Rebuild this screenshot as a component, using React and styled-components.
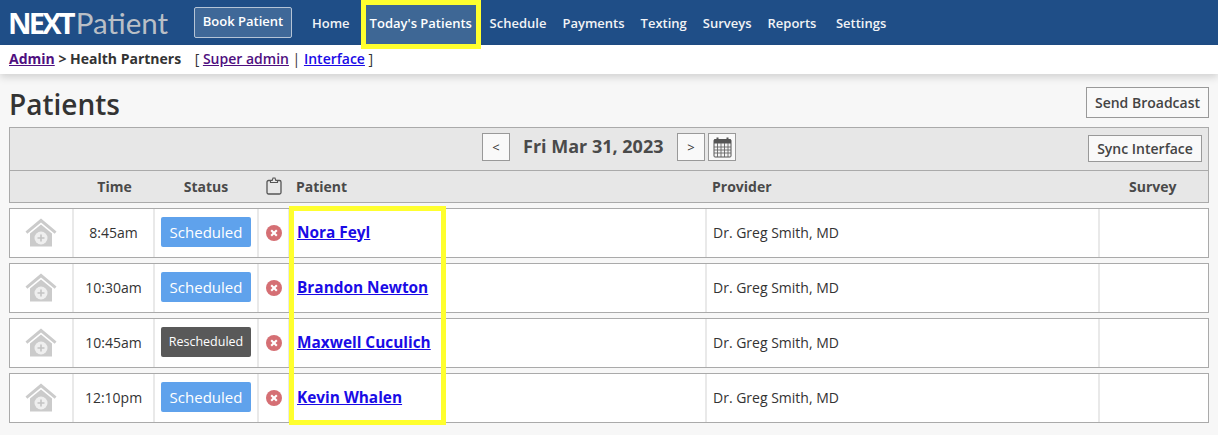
import styled, { createGlobalStyle } from "styled-components";

const GlobalStyle = createGlobalStyle`
  html, body { margin: 0; padding: 0; }
  body {
    background: #f7f7f7;
    font-family: "Open Sans", "Liberation Sans", sans-serif;
    color: #333;
    height: 435px;
    overflow: hidden;
  }
`;

const COLUMNS = "64px 81px 104px 31px 1fr 393px 108px";

const TopBar = styled.header`
  height: 45px;
  background: #1f4e87;
  display: flex;
  align-items: flex-start;
  padding-left: 8px;
  box-sizing: border-box;
  position: relative;
`;

const Logo = styled.div`
  width: 186px;
  height: 45px;
  font-family: Lato, "Open Sans", sans-serif;
  font-size: 29.5px;
  line-height: 45px;
  color: #b9bfc6;
  white-space: nowrap;
`;

const LogoBold = styled.b`
  font-family: "Open Sans", sans-serif;
  font-size: 29px;
  font-weight: 700;
  color: #fff;
  letter-spacing: -2.8px;
  margin-right: 3px;
`;

const BookButton = styled.div`
  box-sizing: border-box;
  width: 98px;
  height: 31px;
  margin-top: 7px;
  margin-right: 6px;
  background: #3f6898;
  border: 1px solid #b5c4d6;
  border-radius: 2px;
  color: #fff;
  font-size: 13px;
  font-weight: 600;
  line-height: 27px;
  text-align: center;
`;

const NavItem = styled.a`
  box-sizing: border-box;
  height: 45px;
  padding: 0 ${(p) => p.$pad || 0}px;
  color: #f1f3f6;
  font-size: 13px;
  font-weight: 600;
  line-height: 47px;
  white-space: nowrap;
`;

const ActiveNav = styled.a`
  box-sizing: border-box;
  height: 49px;
  margin: 0 9px 0 -3px;
  padding: 0 4px;
  width: 120px;
  background: #3e6795;
  border: 5px solid #ffff2e;
  color: #fff;
  font-size: 13px;
  font-weight: 600;
  line-height: 37px;
  text-align: center;
  white-space: nowrap;
  position: relative;
  z-index: 2;
`;

const Crumbs = styled.div`
  height: 29px;
  background: #fff;
  box-shadow: 0 3px 8px rgba(0, 0, 0, 0.16);
  padding-left: 9px;
  font-size: 14px;
  font-weight: 600;
  line-height: 28px;
  color: #333;
  white-space: pre;
  position: relative;
`;

const CrumbBold = styled.span`
  font-weight: 700;
  margin-right: -1px;
`;

const CrumbLink = styled.a`
  color: ${(p) => (p.$visited ? "#4f0f80" : "#1a0be6")};
  text-decoration: underline;
`;

const Plain = styled.span`
  font-weight: 400;
`;

const Page = styled.main`
  padding: 0 9px;
  position: relative;
`;

const TitleRow = styled.div`
  height: 53px;
  display: flex;
  justify-content: space-between;
  align-items: flex-start;
`;

const Title = styled.h1`
  margin: 11px 0 0;
  font-size: 28px;
  font-weight: 600;
  line-height: 38px;
  color: #333;
`;

const PlainButton = styled.div`
  box-sizing: border-box;
  background: #f9f9f9;
  border: 1px solid #999;
  color: #444;
  font-size: 14px;
  font-weight: 600;
  text-align: center;
  white-space: nowrap;
`;

const BroadcastButton = styled(PlainButton)`
  width: 123px;
  height: 31px;
  margin-top: 13px;
  line-height: 29px;
`;

const Panel = styled.section`
  box-sizing: border-box;
  height: 76px;
  background: #e7e7e7;
  border: 1px solid #aaa;
`;

const DateBar = styled.div`
  height: 43px;
  box-sizing: border-box;
  border-bottom: 1px solid #aaa;
  display: flex;
  align-items: flex-start;
  position: relative;
  padding: 5px 0 0 472px;
`;

const ArrowButton = styled(PlainButton)`
  width: 28px;
  height: 28px;
  line-height: 27px;
  font-size: 13px;
  font-weight: 400;
  color: #333;
`;

const DateText = styled.div`
  width: 167px;
  padding-left: 13px;
  box-sizing: border-box;
  font-size: 18px;
  font-weight: 700;
  line-height: 27px;
  color: #4a4a4a;
  white-space: nowrap;
`;

const CalendarButton = styled(PlainButton)`
  width: 28px;
  height: 28px;
  margin-left: 3px;
  display: flex;
  align-items: center;
  justify-content: center;
`;

const SyncButton = styled(PlainButton)`
  position: absolute;
  right: 6px;
  top: 7px;
  width: 114px;
  height: 27px;
  line-height: 25px;
`;

const HeadRow = styled.div`
  display: grid;
  grid-template-columns: ${COLUMNS};
  height: 31px;
  padding-bottom: 1px;
  box-sizing: border-box;
  align-items: center;
  font-size: 14px;
  font-weight: 700;
  color: #4a4a4a;
`;

const HeadCell = styled.div`
  padding-left: ${(p) => p.$left || 0}px;
  padding-right: ${(p) => p.$right || 0}px;
  display: flex;
  justify-content: ${(p) => (p.$center ? "center" : "flex-start")};
`;

const Rows = styled.div`
  margin-top: 5px;
  display: flex;
  flex-direction: column;
  gap: 5px;
  position: relative;
`;

const Row = styled.div`
  box-sizing: border-box;
  height: 50px;
  background: #fff;
  border: 1px solid #aaa;
  display: grid;
  grid-template-columns: ${COLUMNS};
`;

const Cell = styled.div`
  display: flex;
  align-items: center;
  justify-content: ${(p) => (p.$center ? "center" : "flex-start")};
  padding-left: ${(p) => p.$left || 0}px;
  padding-bottom: 2px;
  border-right: ${(p) => (p.$last ? "none" : "2px solid #e9e9e9")};
  font-size: 14px;
  color: #333;
  min-width: 0;
`;

const Badge = styled.div`
  width: 90px;
  height: 30px;
  border-radius: 2px;
  background: ${(p) => (p.$dark ? "#595959" : "#5fa2ec")};
  color: #fff;
  font-size: ${(p) => (p.$dark ? "12.5px" : "15px")};
  line-height: 30px;
  text-align: center;
`;

const RemoveWrap = styled.div`
  display: flex;
  margin-top: 2px;
`;

const PatientLink = styled.a`
  color: #1a0be6;
  font-size: 15.4px;
  font-weight: 700;
  text-decoration: underline;
`;

const Highlight = styled.div`
  position: absolute;
  left: 280px;
  top: -2px;
  width: 157px;
  height: 219px;
  box-sizing: border-box;
  border: 5px solid #ffff2e;
  pointer-events: none;
`;

function HouseIcon() {
  return (
    <svg width="32" height="29" viewBox="0 0 32 29">
      <path d="M16 .5 .5 13.5 2.3 15.8 16 4.6 29.7 15.8 31.500 13.500z" fill="#cbcbcb" />
      <path d="M16 6.500 5 15.500V28.500H27V15.500z" fill="#cbcbcb" />
      <circle cx="16" cy="20" r="6.500" fill="#efefef" />
      <path d="M16 16.500v7M12.500 20h7" stroke="#c4c4c4" strokeWidth="1.600" />
    </svg>
  );
}

function RemoveIcon() {
  return (
    <svg width="16" height="16" viewBox="0 0 16 16">
      <circle cx="8" cy="8" r="8" fill="#d56f74" />
      <path d="M5.200 5.200l5.600 5.600M10.800 5.200l-5.600 5.600" stroke="#fff" strokeWidth="2.100" />
    </svg>
  );
}

function ClipboardIcon() {
  return (
    <svg width="16" height="18" viewBox="0 0 16 18" fill="none">
      <rect x="1" y="3.500" width="14" height="13.500" rx="1.500" stroke="#555" strokeWidth="1.300" />
      <path d="M4.500 5.500V3.500H6.200L7 1h2l.8 2.500h1.700v2z" fill="#e7e7e7" stroke="#555" strokeWidth="1.100" />
    </svg>
  );
}

function CalendarIcon() {
  const columns = [5.500, 9, 12.500, 16];
  const rows = [11, 14, 17];
  return (
    <svg width="20" height="22" viewBox="0 0 20 22" fill="none">
      <rect x="2" y="3.500" width="17" height="17.500" rx="1" fill="#f4f4f4" stroke="#555" />
      <rect x="2" y="3.500" width="17" height="4" fill="#555" />
      <rect x="4.500" y="1.500" width="2" height="3.500" fill="#555" />
      <rect x="14.500" y="1.500" width="2" height="3.500" fill="#555" />
      {columns.map((x) => (
        <path key={x} d={`M${x} 7v14`} stroke="#666" strokeWidth="0.900" />
      ))}
      {rows.map((y) => (
        <path key={y} d={`M2 ${y}h17`} stroke="#666" strokeWidth="0.900" />
      ))}
    </svg>
  );
}

const appointments = [
  { time: "8:45am", status: "Scheduled", name: "Nora Feyl" },
  { time: "10:30am", status: "Scheduled", name: "Brandon Newton" },
  { time: "10:45am", status: "Rescheduled", name: "Maxwell Cuculich" },
  { time: "12:10pm", status: "Scheduled", name: "Kevin Whalen" },
];

export default function App() {
  return (
    <>
      <GlobalStyle />
      <TopBar>
        <Logo>
          <LogoBold>NEXT</LogoBold>Patient
        </Logo>
        <BookButton>Book Patient</BookButton>
        <NavItem $pad={14}>Home</NavItem>
        <ActiveNav>Today's Patients</ActiveNav>
        <NavItem>Schedule</NavItem>
        <NavItem $pad={16}>Payments</NavItem>
        <NavItem>Texting</NavItem>
        <NavItem $pad={16}>Surveys</NavItem>
        <NavItem>Reports</NavItem>
        <NavItem $pad={19.5}>Settings</NavItem>
      </TopBar>
      <Crumbs>
        <CrumbBold>
          <CrumbLink $visited>Admin</CrumbLink> {">"} Health Partners
        </CrumbBold>
        {"    "}
        <Plain>[ </Plain>
        <CrumbLink $visited>Super admin</CrumbLink>
        <Plain> | </Plain>
        <CrumbLink>Interface</CrumbLink>
        <Plain> ]</Plain>
      </Crumbs>
      <Page>
        <TitleRow>
          <Title>Patients</Title>
          <BroadcastButton>Send Broadcast</BroadcastButton>
        </TitleRow>
        <Panel>
          <DateBar>
            <ArrowButton>&lt;</ArrowButton>
            <DateText>Fri Mar 31, 2023</DateText>
            <ArrowButton>&gt;</ArrowButton>
            <CalendarButton>
              <CalendarIcon />
            </CalendarButton>
            <SyncButton>Sync Interface</SyncButton>
          </DateBar>
          <HeadRow>
            <div />
            <HeadCell $center>Time</HeadCell>
            <HeadCell $center $right={2}>Status</HeadCell>
            <HeadCell $center $right={2}>
              <ClipboardIcon />
            </HeadCell>
            <HeadCell $left={6}>Patient</HeadCell>
            <HeadCell $left={5}>Provider</HeadCell>
            <HeadCell $left={29}>Survey</HeadCell>
          </HeadRow>
        </Panel>
        <Rows>
          {appointments.map((a) => (
            <Row key={a.name}>
              <Cell $center>
                <HouseIcon />
              </Cell>
              <Cell $center>{a.time}</Cell>
              <Cell $center>
                <Badge $dark={a.status === "Rescheduled"}>{a.status}</Badge>
              </Cell>
              <Cell $left={7}>
                <RemoveWrap>
                  <RemoveIcon />
                </RemoveWrap>
              </Cell>
              <Cell $left={7}>
                <PatientLink>{a.name}</PatientLink>
              </Cell>
              <Cell $left={6}>Dr. Greg Smith, MD</Cell>
              <Cell $last />
            </Row>
          ))}
          <Highlight />
        </Rows>
      </Page>
    </>
  );
}
